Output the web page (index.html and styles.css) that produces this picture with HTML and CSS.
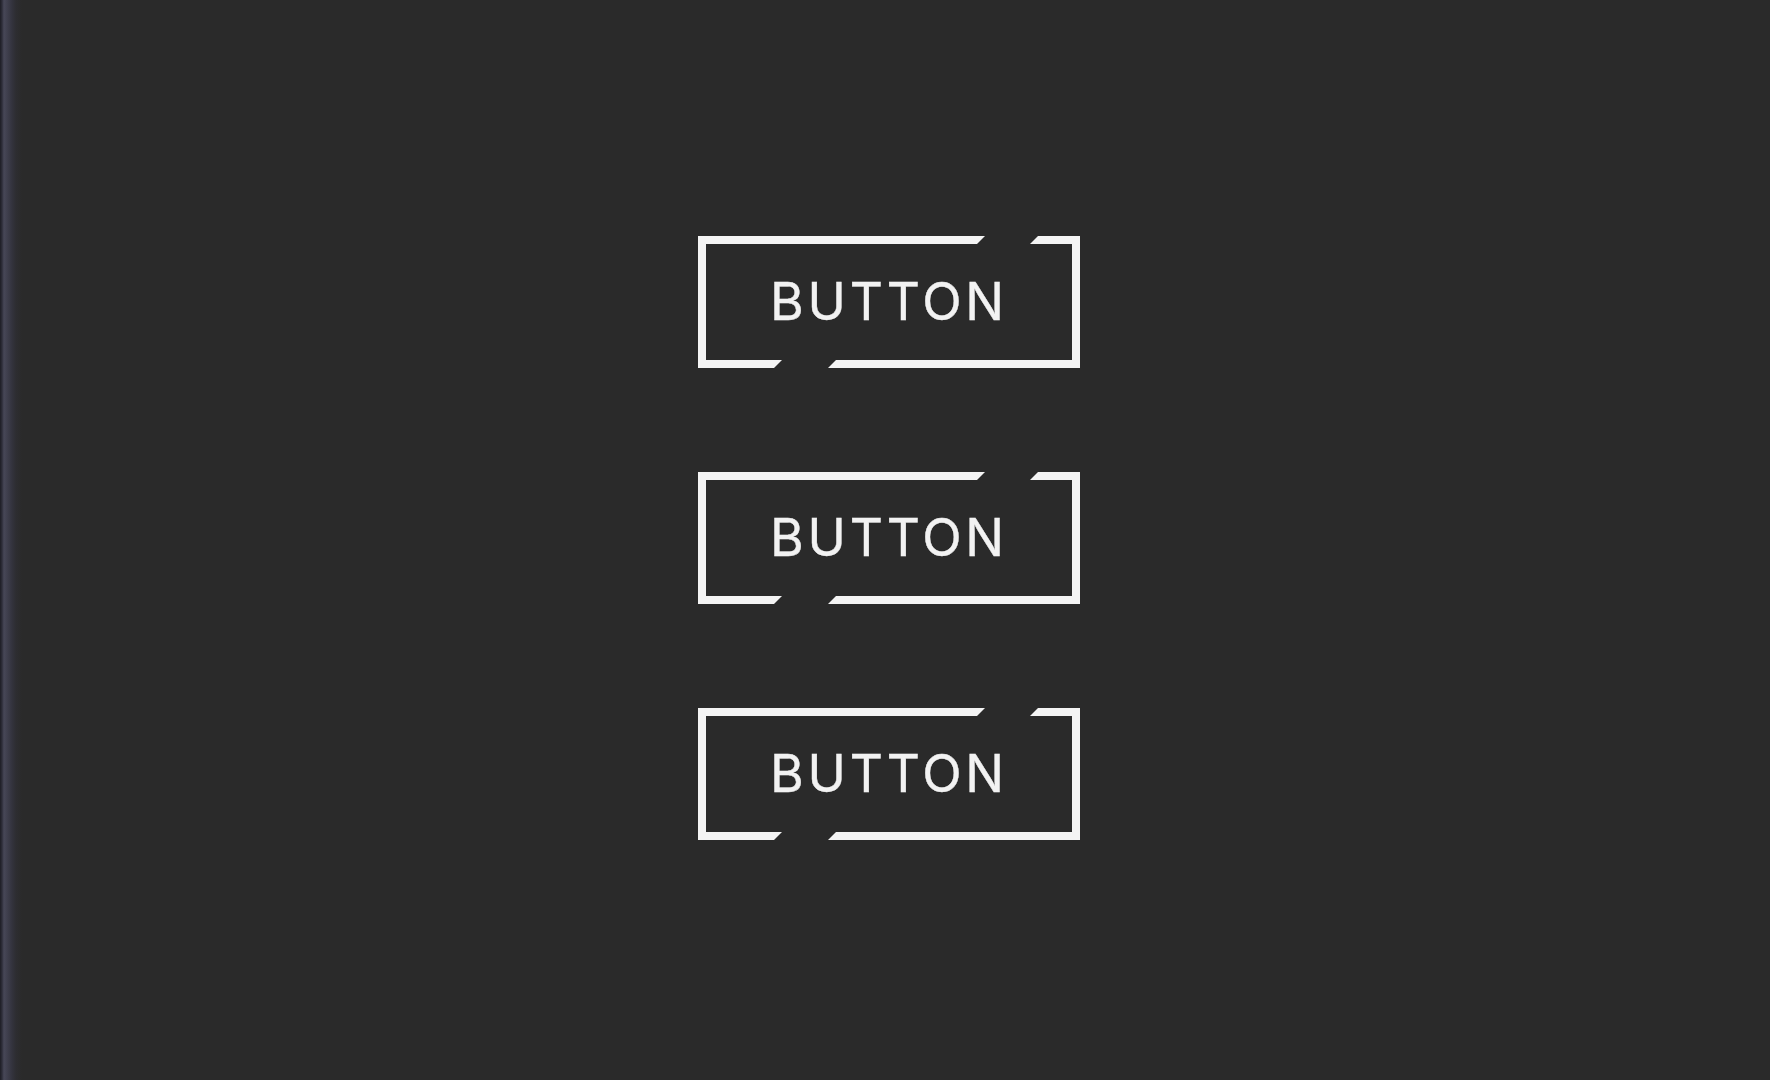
FILE: index.html
```html
<!DOCTYPE html>
<html lang="en">
<head>
<meta charset="utf-8">
<title>Buttons</title>
<link rel="stylesheet" href="styles.css">
</head>
<body>
  <main class="stack">
    <button class="cut-btn" type="button">BUTTON</button>
    <button class="cut-btn" type="button">BUTTON</button>
    <button class="cut-btn" type="button">BUTTON</button>
  </main>
</body>
</html>
```

FILE: styles.css
```css
html, body {
  margin: 0;
  height: 100%;
}

body {
  background:
    linear-gradient(to right,
      #1d1d24 0px, #2e2e3a 2px, #474757 4px, #3d3d4b 8px,
      #33333d 12px, #2d2d31 16px, #2a2a2a 22px) left top / 22px 100% no-repeat,
    #2a2a2a;
  font-family: Inter, "Liberation Sans", Arial, sans-serif;
}

.stack {
  box-sizing: border-box;
  height: 100%;
  display: flex;
  flex-direction: column;
  align-items: center;
  justify-content: center;
  gap: 104px;
  padding: 0 0 4px 8px;
}

.cut-btn {
  position: relative;
  box-sizing: border-box;
  width: 382px;
  height: 132px;
  padding: 0;
  border: 8px solid #f4f4f4;
  background: transparent;
  color: #f2f2f2;
  font-family: inherit;
  font-size: 51.5px;
  font-weight: 400;
  letter-spacing: 3.8px;
  line-height: 1;
  -webkit-text-stroke: 0.4px #f2f2f2;
  cursor: pointer;
}

/* slanted notches cut out of the top and bottom edges */
.cut-btn::before,
.cut-btn::after {
  content: "";
  position: absolute;
  height: 10px;
  background: #2a2a2a;
  transform: skewX(-45deg);
}

.cut-btn::before {
  top: -9px;
  left: 275px;
  width: 53px;
}

.cut-btn::after {
  bottom: -9px;
  left: 72px;
  width: 54px;
}
```
